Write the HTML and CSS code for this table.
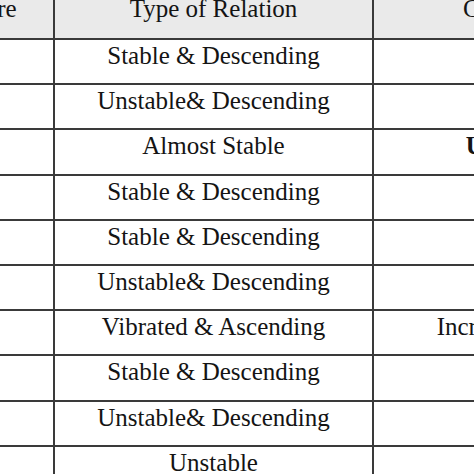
FILE: index.html
```html
<!DOCTYPE html>
<html>
<head>
<meta charset="utf-8">
<link rel="stylesheet" href="styles.css">
</head>
<body>
<div class="frame">
<table class="rel">
  <colgroup>
    <col class="c-fig">
    <col class="c-type">
    <col class="c-cond">
  </colgroup>
  <thead>
    <tr class="head"><th>Figure</th><th>Type of Relation</th><th>Condition</th></tr>
  </thead>
  <tbody>
    <tr><td></td><td>Stable &amp; Descending</td><td></td></tr>
    <tr><td></td><td>Unstable&amp; Descending</td><td></td></tr>
    <tr><td></td><td>Almost Stable</td><td class="strong">Unstable</td></tr>
    <tr><td></td><td>Stable &amp; Descending</td><td></td></tr>
    <tr><td></td><td>Stable &amp; Descending</td><td></td></tr>
    <tr><td></td><td>Unstable&amp; Descending</td><td></td></tr>
    <tr><td></td><td>Vibrated &amp; Ascending</td><td class="shifted">Increasing Trend</td></tr>
    <tr><td></td><td>Stable &amp; Descending</td><td></td></tr>
    <tr><td></td><td>Unstable&amp; Descending</td><td></td></tr>
    <tr><td></td><td>Unstable</td><td></td></tr>
  </tbody>
</table>
</div>
</body>
</html>
```

FILE: styles.css
```css
html, body {
  margin: 0;
  padding: 0;
  background: #ffffff;
}
body {
  width: 474px;
  height: 474px;
  overflow: hidden;
}
.frame {
  width: 474px;
  height: 474px;
  overflow: hidden;
}
.rel {
  border-collapse: collapse;
  table-layout: fixed;
  width: 739px;
  margin-left: -87px;
  margin-top: -9px;
  font-family: "Liberation Serif", "Times New Roman", serif;
  font-size: 25px;
  color: #141414;
}
.c-fig { width: 140px; }
.c-type { width: 319px; }
.c-cond { width: 280px; }
.rel th,
.rel td {
  border: 2px solid #3a3a3a;
  padding: 2px 0 0 0;
  line-height: 28px;
  text-align: center;
  vertical-align: top;
  white-space: nowrap;
  font-weight: normal;
}
.rel tbody tr {
  height: 45.2px;
}
.rel .head {
  height: 47px;
  background: #eaeaea;
}
.rel .strong {
  font-weight: bold;
}
.rel .shifted {
  padding-left: 16px;
}
```
